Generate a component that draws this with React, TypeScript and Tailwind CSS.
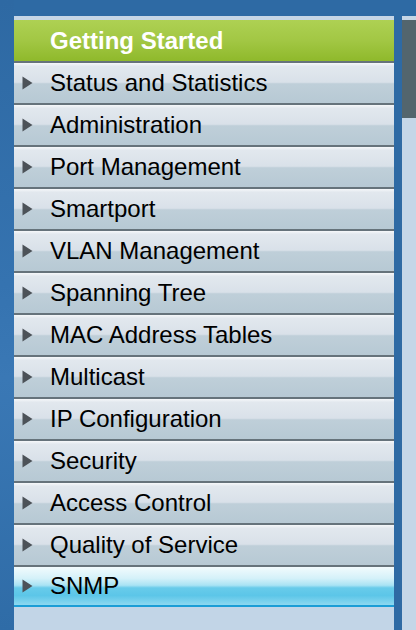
const ITEMS = [
  "Status and Statistics",
  "Administration",
  "Port Management",
  "Smartport",
  "VLAN Management",
  "Spanning Tree",
  "MAC Address Tables",
  "Multicast",
  "IP Configuration",
  "Security",
  "Access Control",
  "Quality of Service",
];

function Arrow() {
  return (
    <svg width="11" height="14" viewBox="0 0 11 14" className="shrink-0">
      <polygon points="0.5,0.5 10.5,7 0.5,13.5" fill="#4c5258" />
    </svg>
  );
}

export default function App() {
  return (
    <div
      className="flex h-[630px] w-[416px] overflow-hidden bg-[#2e6aa4]"
      style={{ fontFamily: '"Liberation Sans", Arial, sans-serif' }}
    >
      <div className="w-[14px] shrink-0 bg-[linear-gradient(180deg,#2e69a3_0%,#3573b0_45%,#3a78b5_60%,#2f6ca7_100%)]" />

      {/* Menu panel */}
      <div className="mt-[16px] flex w-[380px] shrink-0 flex-col bg-[#c2d5e7]">
        <div className="h-[4px] bg-[#c6d6e6]" />
        <div className="flex h-[41px] items-center bg-[linear-gradient(180deg,#aed153_0%,#a2c744_50%,#8fb92b_100%)] pl-[36px] text-[24px] font-bold text-white">
          Getting Started
        </div>

        {ITEMS.map((label) => (
          <div
            key={label}
            className="flex h-[42px] items-center gap-[17px] border-t-2 border-t-[#66737b] bg-[linear-gradient(180deg,#f6f8fa_0%,#e2e8ee_8%,#d9e1e9_48%,#bfcfd9_52%,#b7c9d4_100%)] pl-[8px] text-[24px] text-black"
          >
            <Arrow />
            <span className="leading-none">{label}</span>
          </div>
        ))}

        <div className="flex h-[42px] items-center gap-[17px] border-t-2 border-t-[#66737b] border-b-2 border-b-[#1b9dd6] bg-[linear-gradient(180deg,#f2fbfd_0%,#d4f1f9_30%,#a9e3f4_48%,#68cbea_55%,#5cc6e8_75%,#8dd8f0_100%)] pl-[8px] text-[24px] text-black">
          <Arrow />
          <span className="leading-none">SNMP</span>
        </div>
      </div>

      <div className="w-[8px] shrink-0" />

      {/* Right strip */}
      <div className="mt-[16px] flex w-[14px] shrink-0 flex-col bg-[#c4d6e8]">
        <div className="h-[4px] bg-[#c6d6e6]" />
        <div className="h-[98px] bg-[#53656d]" />
      </div>
    </div>
  );
}
